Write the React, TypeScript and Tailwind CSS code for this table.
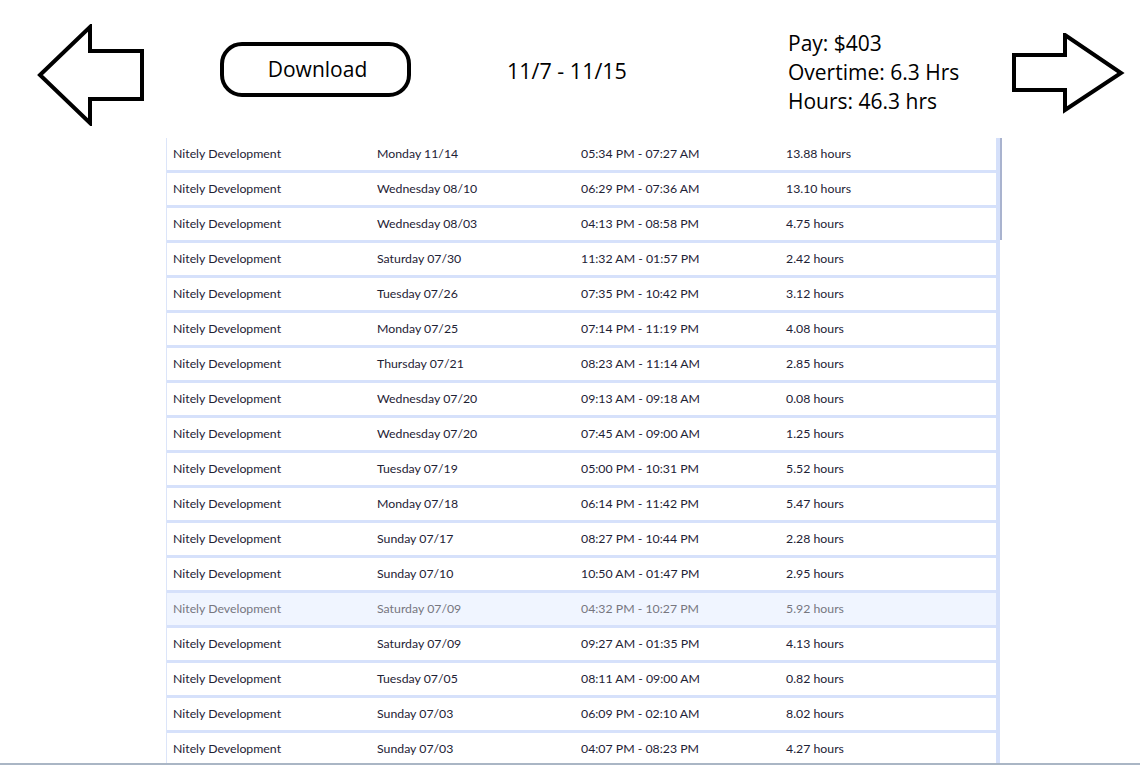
const SHIFTS = [
  { day: "Monday 11/14", time: "05:34 PM - 07:27 AM", hours: "13.88 hours" },
  { day: "Wednesday 08/10", time: "06:29 PM - 07:36 AM", hours: "13.10 hours" },
  { day: "Wednesday 08/03", time: "04:13 PM - 08:58 PM", hours: "4.75 hours" },
  { day: "Saturday 07/30", time: "11:32 AM - 01:57 PM", hours: "2.42 hours" },
  { day: "Tuesday 07/26", time: "07:35 PM - 10:42 PM", hours: "3.12 hours" },
  { day: "Monday 07/25", time: "07:14 PM - 11:19 PM", hours: "4.08 hours" },
  { day: "Thursday 07/21", time: "08:23 AM - 11:14 AM", hours: "2.85 hours" },
  { day: "Wednesday 07/20", time: "09:13 AM - 09:18 AM", hours: "0.08 hours" },
  { day: "Wednesday 07/20", time: "07:45 AM - 09:00 AM", hours: "1.25 hours" },
  { day: "Tuesday 07/19", time: "05:00 PM - 10:31 PM", hours: "5.52 hours" },
  { day: "Monday 07/18", time: "06:14 PM - 11:42 PM", hours: "5.47 hours" },
  { day: "Sunday 07/17", time: "08:27 PM - 10:44 PM", hours: "2.28 hours" },
  { day: "Sunday 07/10", time: "10:50 AM - 01:47 PM", hours: "2.95 hours" },
  { day: "Saturday 07/09", time: "04:32 PM - 10:27 PM", hours: "5.92 hours", active: true },
  { day: "Saturday 07/09", time: "09:27 AM - 01:35 PM", hours: "4.13 hours" },
  { day: "Tuesday 07/05", time: "08:11 AM - 09:00 AM", hours: "0.82 hours" },
  { day: "Sunday 07/03", time: "06:09 PM - 02:10 AM", hours: "8.02 hours" },
  { day: "Sunday 07/03", time: "04:07 PM - 08:23 PM", hours: "4.27 hours" },
];

function LeftArrow() {
  return (
    <svg width="110" height="102" viewBox="0 0 110 102" className="block">
      <polygon
        points="4,51 54,3 54,27 106,27 106,75 54,75 54,99"
        fill="white"
        stroke="black"
        strokeWidth={4}
        strokeLinejoin="miter"
      />
    </svg>
  );
}

function RightArrow() {
  return (
    <svg width="116" height="82" viewBox="0 0 116 82" className="block">
      <polygon
        points="4,22 55,22 55,2 111,40 55,77 55,57 4,57"
        fill="white"
        stroke="black"
        strokeWidth={4}
        strokeLinejoin="miter"
      />
    </svg>
  );
}

export default function App() {
  return (
    <div className="w-[1140px] h-[765px] overflow-hidden bg-white border-b-2 border-[#aab6c5] font-['Lato',sans-serif]">
      {/* Header */}
      <div className="h-[138px] flex items-start font-['Open_Sans',sans-serif] text-black">
        <div className="ml-[36px] mt-[24px]">
          <LeftArrow />
        </div>
        <button className="ml-[74px] mt-[42px] w-[191px] h-[55px] rounded-[22px] border-[4px] border-black flex items-center justify-center pl-[4px] text-[21px] leading-none">
          Download
        </button>
        <div className="ml-[96px] w-[281px] mt-[57px] text-[21.5px] leading-[28px]">11/7 - 11/15</div>
        <div className="mt-[29px] text-[21px] leading-[29px]">
          <div>Pay: $403</div>
          <div>Overtime: 6.3 Hrs</div>
          <div>Hours: 46.3 hrs</div>
        </div>
        <div className="ml-auto mr-[14px] mt-[33px]">
          <RightArrow />
        </div>
      </div>

      {/* Shift list */}
      <div className="ml-[166px] flex">
        <div className="w-[830px] border-l border-[#dce5f9]">
          {SHIFTS.map((s, i) => (
            <div
              key={i}
              className={`h-[35px] border-b-[3px] border-[#d6e1fb] grid grid-cols-[204px_204px_205px_1fr] items-center pl-[6px] text-[12.3px] ${s.active ? "bg-[#f0f5ff] text-[#77777f]" : "bg-white text-[#1e2235]"}`}
            >
              <span>Nitely Development</span>
              <span>{s.day}</span>
              <span>{s.time}</span>
              <span>{s.hours}</span>
            </div>
          ))}
        </div>
        {/* Scrollbar */}
        <div className="w-[4px] bg-[#d5e0fa]" />
        <div className="w-[2px]">
          <div className="h-[102px] bg-[#a9b3cf]" />
        </div>
      </div>
    </div>
  );
}
